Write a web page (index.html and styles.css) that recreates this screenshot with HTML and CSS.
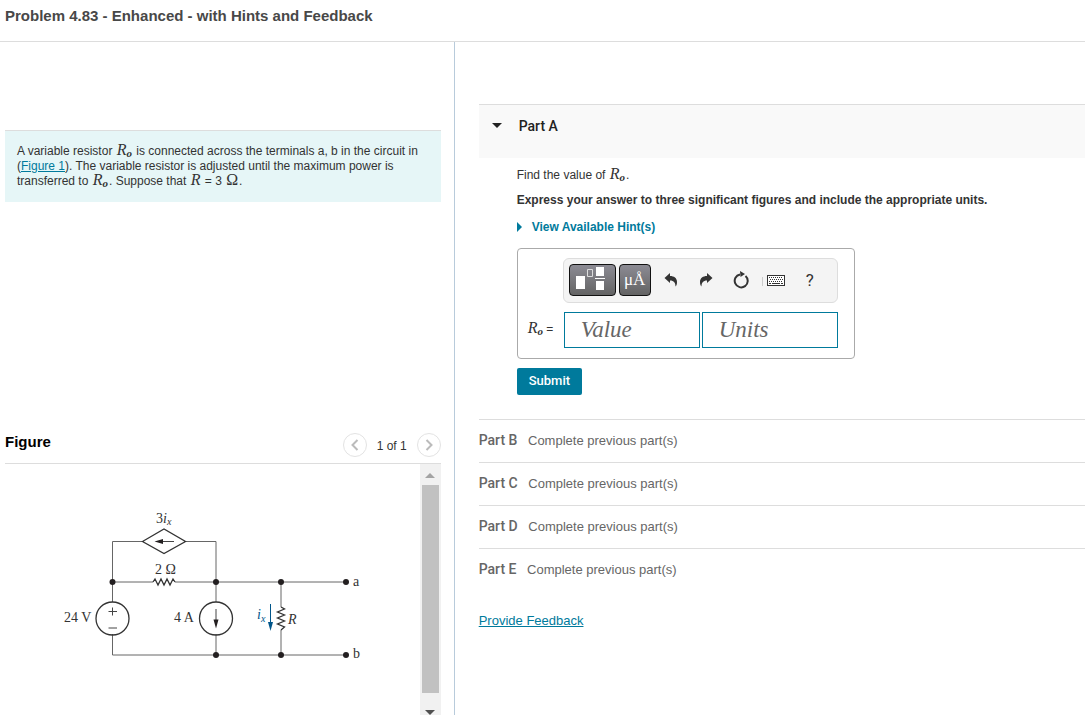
FILE: index.html
```html
<!doctype html>
<html lang="en">
  <head>
    <meta charset="utf-8">
    <meta name="viewport" content="width=device-width">
    <title>Problem 4.83</title>
    <link rel="stylesheet" href="styles.css">
  </head>
  <body>
    <header>
      <h1>Problem 4.83 - Enhanced - with Hints and Feedback</h1>
    </header>

    <div class="columns">
      <section class="left">
        <div class="problem">
          A variable resistor <span class="math"><i>R</i><sub>o</sub></span> is connected across the terminals a, b in the circuit in (<a href="#figure">Figure 1</a>). The variable resistor is adjusted until the maximum power is transferred to <span class="math"><i>R</i><sub>o</sub></span>. Suppose that <span class="math"><i>R</i></span> = 3 <span class="math">Ω</span>.
        </div>

        <div class="figure" id="figure">
          <div class="figure-head">
            <h2>Figure</h2>
            <div class="pager">
              <button type="button" aria-label="Previous figure"><svg width="8" height="12" viewBox="0 0 8 12"><path d="M6.5 1 L1.5 6 L6.5 11"/></svg></button>
              <span>1 of 1</span>
              <button type="button" aria-label="Next figure"><svg width="8" height="12" viewBox="0 0 8 12"><path d="M1.5 1 L6.5 6 L1.5 11"/></svg></button>
            </div>
          </div>
          <div class="figure-body">
            <svg class="circuit" width="320" height="170" viewBox="50 500 320 170">
              <!-- wires -->
              <g class="wire">
                <path d="M142 541.500 H112.500 V602 M112.500 634 V655 H345 M186 541.500 H216 V602 M216 634 V655"/>
                <path d="M112.500 582 H153 M175 582 H345 M281 582 V607 M281 630 V655"/>
              </g>
              <g class="part">
                <path d="M142.500 541.500 L164 529 L185.500 541.500 L164 553.500 Z"/>
                <path d="M153 582 L155 579 L158 585 L161 579 L164 585 L167 579 L170 585 L173 579 L175 582"/>
                <path d="M281 607 L284.500 609 L277.500 612 L284.500 615 L277.500 618 L284.500 621 L277.500 624 L284.500 627 L281 630"/>
                <circle cx="112.500" cy="618.500" r="16.500"/>
                <circle cx="216" cy="618.500" r="16.500"/>
              </g>
              <!-- polarity and arrows -->
              <path class="thin" d="M108.500 611.500 H117 M112.500 607.500 V615.500 M108.500 628 H117 M174 541.500 H162 M216 609 V621"/>
              <path class="dot" d="M154.500 541.500 L163 539 V544 Z M213.500 619.500 H218.500 L216 628.500 Z"/>
              <path class="blue-line" d="M270.500 604 V624"/>
              <path class="blue" d="M268 622 H273 L270.500 631 Z"/>
              <g class="dot">
                <circle cx="112.500" cy="582" r="3"/>
                <circle cx="216" cy="582" r="3"/>
                <circle cx="281" cy="582" r="3"/>
                <circle cx="346" cy="582" r="3"/>
                <circle cx="216" cy="655" r="3"/>
                <circle cx="281" cy="655" r="3"/>
                <circle cx="346" cy="655" r="3"/>
              </g>
              <text x="156" y="523">3<tspan class="it">i</tspan><tspan class="it small" dy="2">x</tspan></text>
              <text x="155" y="574">2 Ω</text>
              <text x="64" y="622">24 V</text>
              <text x="174" y="622">4 A</text>
              <text class="blue it" x="257" y="619">i<tspan class="small" dy="3">x</tspan></text>
              <text class="it" x="288" y="624">R</text>
              <text x="353" y="586">a</text>
              <text x="353" y="658">b</text>
            </svg>
            <div class="scrollbar">
              <span class="arrow up"></span>
              <span class="thumb"></span>
              <span class="arrow down"></span>
            </div>
          </div>
        </div>
      </section>

      <main class="right">
        <div class="part-head">
          <span class="caret"></span>
          <h2>Part A</h2>
        </div>

        <form class="part-body" onsubmit="return false">
          <p>Find the value of <span class="math"><i>R</i><sub>o</sub></span>.</p>
          <p><b>Express your answer to three significant figures and include the appropriate units.</b></p>
          <a class="hints" href="#">View Available Hint(s)</a>

          <div class="answer">
            <div class="toolbar">
              <button type="button" class="dark templates" aria-label="Templates">
                <svg width="30" height="26" viewBox="0 0 30 26">
                  <path fill="#fff" d="M1 11 H10 V24 H1 Z M21 2 H29 V11 H21 Z M20 13 H30 V14 H20 Z M21 16 H29 V25 H21 Z"/>
                  <path fill="none" stroke="#ddd" d="M12.500 4.500 H17.500 V11.500 H12.500 Z"/>
                </svg>
              </button>
              <button type="button" class="dark units">μÅ</button>
              <button type="button" class="tool" aria-label="Undo">
                <svg width="14" height="14" viewBox="0 0 14 14"><path d="M0.500 5 L6 0 V3 C10 3 13 5 13 9 C13 11 12.500 12.500 11.500 13.500 C11.500 10 10 7.500 6 7.500 V10 Z"/></svg>
              </button>
              <button type="button" class="tool" aria-label="Redo">
                <svg width="14" height="14" viewBox="0 0 14 14"><path d="M13.500 5 L8 0 V3 C4 3 1 5 1 9 C1 11 1.500 12.500 2.500 13.500 C2.500 10 4 7.500 8 7.500 V10 Z"/></svg>
              </button>
              <button type="button" class="tool" aria-label="Reset">
                <svg width="16" height="18" viewBox="0 0 16 18"><path class="ring" d="M12.500 5 A6.500 6.500 0 1 1 7 3.500"/><path d="M7 0 L12 3 L7.500 6 Z"/></svg>
              </button>
              <button type="button" class="tool keys" aria-label="Keyboard shortcuts">
                <svg width="19" height="12" viewBox="0 0 19 12"><rect class="keyframe" x="0.500" y="0.500" width="17" height="10"/><path d="M2 2.500 H16 M3 4.500 H16 M2 6.500 H16" class="keyrow"/><path class="space" d="M2 8.500 H4 M5 8.500 H13 M14 8.500 H16"/></svg>
              </button>
              <button type="button" class="tool help" aria-label="Help">?</button>
            </div>
            <div class="fields">
              <label for="value"><span class="math"><i>R</i><sub>o</sub></span> =</label>
              <input id="value" type="text" placeholder="Value">
              <input type="text" placeholder="Units" aria-label="Units">
            </div>
          </div>

          <button class="submit">Submit</button>
        </form>

        <ul class="parts">
          <li><b>Part B</b> Complete previous part(s)</li>
          <li><b>Part C</b> Complete previous part(s)</li>
          <li><b>Part D</b> Complete previous part(s)</li>
          <li><b>Part E</b> Complete previous part(s)</li>
        </ul>
        <a class="feedback" href="#">Provide Feedback</a>
      </main>
    </div>
  </body>
</html>
```
FILE: styles.css
```css
* {
  box-sizing: border-box;
}
body {
  margin: 0;
  min-height: 100vh;
  display: flex;
  flex-direction: column;
  font: 12px/15px "Liberation Sans", Arial, sans-serif;
  color: #333;
  background: #fff;
}
h1, h2, p {
  margin: 0;
}
a {
  color: #007a9c;
}
button {
  font-family: inherit;
  cursor: pointer;
}
header {
  padding: 6px 5px 15px;
  border-bottom: 1px solid #ddd;
}
h1 {
  font-size: 15px;
  line-height: 20px;
  color: #484848;
}
.math {
  margin: 0 1px;
  font-family: "Liberation Serif", serif;
  font-size: 16px;
  line-height: 0;
}
.math sub {
  font-size: 11px;
  font-style: italic;
  font-weight: bold;
  line-height: 0;
  vertical-align: -2px;
}
.columns {
  flex: 1;
  display: flex;
}

/* left side */
.left {
  width: calc(42% - 1px);
  display: flex;
  flex-direction: column;
  padding: 88px 13px 0 5px;
  border-right: 1px solid #b8cbdb;
}
.problem {
  padding: 13px 12px;
  border-top: 1px solid #ddd;
  background: #e6f6f7;
}
.figure {
  flex: 1;
  display: flex;
  flex-direction: column;
  margin-top: 231px;
}
.figure-head {
  display: flex;
  justify-content: space-between;
  height: 31px;
  border-bottom: 1px solid #ddd;
}
.figure h2 {
  font-size: 15px;
  line-height: 18px;
  color: #000;
}
.pager {
  display: flex;
  gap: 10px;
  line-height: 26px;
}
.pager button {
  display: flex;
  align-items: center;
  justify-content: center;
  width: 24px;
  height: 24px;
  padding: 0;
  border: 1px solid #e3e3e3;
  border-radius: 50%;
  background: #fff;
}
.pager path {
  fill: none;
  stroke: #bbb;
  stroke-width: 2;
}
.figure-body {
  flex: 1;
  display: flex;
  justify-content: space-between;
}
.circuit {
  margin: 36px 0 0 45px;
  font: 14px "Liberation Serif", serif;
  fill: #333;
}
.wire, .part, .thin, .blue-line {
  fill: none;
  stroke: #666;
}
.part {
  stroke: #333;
  stroke-width: 1.3;
}
.thin {
  stroke: #444;
}
.dot {
  fill: #231f20;
}
.blue {
  fill: #00558a;
}
.blue-line {
  stroke: #00558a;
}
.it {
  font-style: italic;
}
.small {
  font-size: 10px;
}
.scrollbar {
  display: flex;
  flex-direction: column;
  align-items: center;
  width: 21px;
  padding: 9px 0 0;
  background: #f1f1f1;
}
.thumb {
  flex: 1;
  width: 17px;
  margin: 7px 0 17px;
  background: #c1c1c1;
}
.arrow {
  border: 5px solid transparent;
}
.up {
  border-top: 0;
  border-bottom-color: #a3a3a3;
}
.down {
  border-bottom: 0;
  border-top-color: #505050;
}

/* right side */
.right {
  flex: 1;
  padding: 62px 0 0 24px;
}
.part-head {
  display: flex;
  gap: 17px;
  height: 54px;
  padding: 12px 13px;
  border-top: 1px solid #ddd;
  background: #f9f9f9;
}
.part-head h2 {
  font: 500 14px/18px Roboto, sans-serif;
  color: #222;
}
.caret {
  height: 5px;
  margin-top: 6px;
  border: 5px solid transparent;
  border-top-color: #222;
  border-bottom: 0;
}
.part-body {
  padding: 10px 0 24px 38px;
}
.part-body p {
  margin-bottom: 10px;
}
.hints {
  display: flex;
  align-items: center;
  gap: 10px;
  margin-bottom: 12px;
  line-height: 18px;
  font-weight: bold;
  text-decoration: none;
}
.hints::before {
  content: "";
  border: 5px solid transparent;
  border-left-color: #007a9c;
  border-right: 0;
}
.answer {
  width: 338px;
  padding: 9px 16px 10px 10px;
  border: 1px solid #aaa;
  border-radius: 4px;
}
.toolbar {
  display: flex;
  align-items: center;
  height: 45px;
  margin-left: 35px;
  padding: 0 5px 2px;
  border: 1px solid #ddd;
  border-radius: 6px;
  background: #f4f4f4;
}
.dark {
  display: flex;
  align-items: center;
  justify-content: center;
  width: 32px;
  height: 32px;
  padding: 0;
  border: 1px solid #111;
  border-radius: 4px;
  background: linear-gradient(#8c8b94, #636363);
  color: #fff;
  font: 17px "Liberation Serif", serif;
}
.templates {
  width: 47px;
  margin-right: 3px;
  padding: 0 4px 4px 0;
}
.tool {
  display: flex;
  align-items: center;
  justify-content: center;
  width: 34px;
  height: 32px;
  margin-left: 1px;
  padding: 0;
  border: 0;
  background: none;
  fill: #333;
  color: #333;
}
.dark + .tool {
  margin-left: 3px;
}
.ring {
  fill: none;
  stroke: #333;
  stroke-width: 2;
}
.keys {
  padding: 3px 4px 0 0;
}
.keys::before {
  content: "";
  height: 9px;
  margin-right: 4px;
  border-left: 1px solid #ccc;
}
.keyframe {
  fill: #fff;
  stroke: #333;
}
.keyrow, .space {
  stroke: #333;
}
.keyrow {
  stroke-dasharray: 1 1;
}
.help {
  padding-right: 2px;
  font: 17px Roboto, sans-serif;
}
.fields {
  display: flex;
  gap: 2px;
  margin-top: 9px;
}
.fields label {
  width: 34px;
  line-height: 34px;
  white-space: nowrap;
}
.fields .math {
  margin: 0;
}
.fields input {
  flex: 1;
  min-width: 0;
  height: 36px;
  padding: 0 16px;
  border: 1px solid #007a9c;
  font: italic 23px "Liberation Serif", serif;
}
.fields input::placeholder {
  color: #666;
}
.submit {
  display: block;
  height: 27px;
  margin-top: 9px;
  padding: 0 12px 2px;
  border: 0;
  border-radius: 2px;
  background: #007a9c;
  color: #fff;
  font: 500 13px Roboto, sans-serif;
}
.parts {
  margin: 0;
  padding: 0;
  list-style: none;
  font-size: 13px;
  color: #666;
}
.parts li {
  padding: 13px 0 14px;
  border-top: 1px solid #ddd;
}
.parts b {
  margin-right: 7px;
  font: 500 14px/15px Roboto, sans-serif;
}
.feedback {
  display: inline-block;
  margin-top: 22px;
  font-size: 13px;
}
```
